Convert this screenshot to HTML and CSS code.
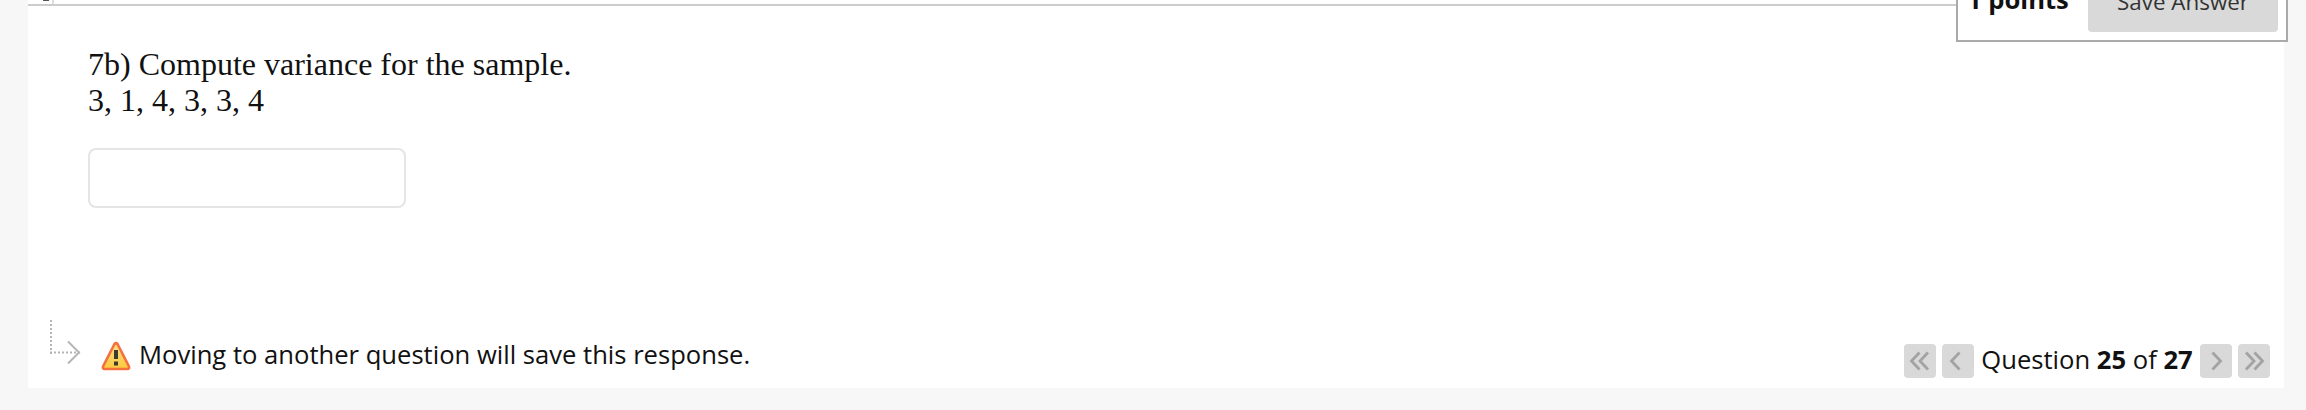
FILE: index.html
```
<!DOCTYPE html>
<html lang="en">
<head>
    <meta charset="UTF-8">
    <meta name="viewport" content="width=device-width, initial-scale=1.0">
    <title>Question 25 of 27</title>
    <link rel="stylesheet" href="styles.css">
</head>
<body>
    <div class="panel">
        <div class="question-header">
            <span class="header-mark"></span>
            <span class="header-tick"></span>
        </div>

        <div class="points-box">
            <span class="points">1 points</span>
            <button class="save-button">Save Answer</button>
        </div>

        <div class="question">
            <p class="question-text">7b) Compute variance for the sample.<br>3, 1, 4, 3, 3, 4</p>
            <input class="answer" type="text" aria-label="Answer">
        </div>

        <div class="footer">
            <svg class="arrow-icon" width="32" height="46" viewBox="0 0 32 46">
                <path d="M1 0V34" stroke-dasharray="2 2"/>
                <path d="M0 32.500H30" stroke-dasharray="2 2"/>
                <path d="M18 21.500L29 32.500L18 43.500"/>
            </svg>
            <svg class="warning-icon" width="30" height="30" viewBox="0 0 30 30">
                <defs>
                    <linearGradient id="warning-fill" x1="0" y1="0" x2="0" y2="1">
                        <stop offset="0" stop-color="#fbe08a"/>
                        <stop offset="1" stop-color="#fcc93c"/>
                    </linearGradient>
                </defs>
                <path d="M13.500 3Q15 1.500 16.500 3L28 25.500Q28.500 28 26.500 28H3.500Q1.500 28 2 25.500Z" fill="url(#warning-fill)" stroke="#f5703f" stroke-width="2.600" stroke-linejoin="round"/>
                <path d="M13 9h4v9h-4zM13 20.500h4v4h-4z" fill="#3c3b30"/>
            </svg>
            <span class="warning-text">Moving to another question will save this response.</span>

            <div class="navigation">
                <button class="nav-button" aria-label="First question">
                    <svg width="32" height="34" viewBox="0 0 32 34"><path d="M15.500 8.500L7.500 17L15.500 25.500M24 8.500L16 17L24 25.500"/></svg>
                </button>
                <button class="nav-button" aria-label="Previous question">
                    <svg width="32" height="34" viewBox="0 0 32 34"><path d="M17.500 8.500L9.500 17L17.500 25.500"/></svg>
                </button>
                <span class="nav-text">Question <b>25</b> of <b>27</b></span>
                <button class="nav-button" aria-label="Next question">
                    <svg width="32" height="34" viewBox="0 0 32 34"><path d="M12.500 8.500L20.500 17L12.500 25.500"/></svg>
                </button>
                <button class="nav-button" aria-label="Last question">
                    <svg width="32" height="34" viewBox="0 0 32 34"><path d="M8 8.500L16 17L8 25.500M16.500 8.500L24.500 17L16.500 25.500"/></svg>
                </button>
            </div>
        </div>
    </div>
</body>
</html>
```
FILE: styles.css
```
* {
    box-sizing: border-box;
}

body {
    margin: 0;
    height: 410px;
    overflow: hidden;
    background-color: #f7f7f7;
    color: #111;
    font-family: "Open Sans", sans-serif;
    font-size: 25.6px;
}

.panel {
    position: relative;
    display: flex;
    flex-direction: column;
    height: 388px;
    margin: 0 22px 0 28px;
    background-color: #fff;
}

.question-header {
    display: flex;
    gap: 3px;
    height: 6px;
    padding-left: 15px;
    border-bottom: 2px solid #ccc;
}

.header-mark {
    width: 6px;
    height: 1px;
    background-color: #555;
}

.header-tick {
    width: 2px;
    height: 4px;
    background-color: #ddd;
}

/* sits over the header line and sticks out of the panel on the right */
.points-box {
    position: absolute;
    top: -30px;
    right: -4px;
    display: flex;
    align-items: flex-end;
    justify-content: space-between;
    width: 332px;
    height: 72px;
    padding: 0 8px 8px 9px;
    border: 2px solid #aaa;
    background-color: #fff;
}

.points {
    font-weight: 700;
    line-height: 36px;
    padding-bottom: 14px;
}

.save-button {
    width: 190px;
    height: 60px;
    padding: 0 0 2px;
    border: none;
    border-radius: 4px;
    background-color: #d9d9d9;
    color: #333;
    font-family: inherit;
    font-size: 22.4px;
}

.question {
    flex: 1;
    padding: 40px 0 0 60px;
}

.question-text {
    margin: 0 0 30px;
    font-family: "Liberation Serif", serif;
    font-size: 32px;
    line-height: 36px;
}

.answer {
    display: block;
    width: 318px;
    height: 60px;
    border: 2px solid #e5e5e5;
    border-radius: 8px;
    background-color: #fff;
}

.footer {
    display: flex;
    align-items: flex-start;
    height: 68px;
    padding: 0 14px 0 22px;
}

.arrow-icon {
    fill: none;
    stroke: #b5b5b5;
    stroke-width: 2;
}

.warning-icon {
    margin: 21px 0 0 19px;
}

.warning-text {
    margin: 17px 0 0 8px;
    line-height: 36px;
}

.navigation {
    display: flex;
    gap: 6px;
    margin: 24px 0 0 auto;
}

.nav-button {
    width: 32px;
    height: 34px;
    padding: 0;
    border: none;
    border-radius: 4px;
    background-color: #d9d9d9;
}

.nav-button svg {
    display: block;
    fill: none;
    stroke: #a3a3a3;
    stroke-width: 2.800;
}

.nav-text {
    width: 214px;
    text-align: center;
    line-height: 32px;
    white-space: nowrap;
}
```
